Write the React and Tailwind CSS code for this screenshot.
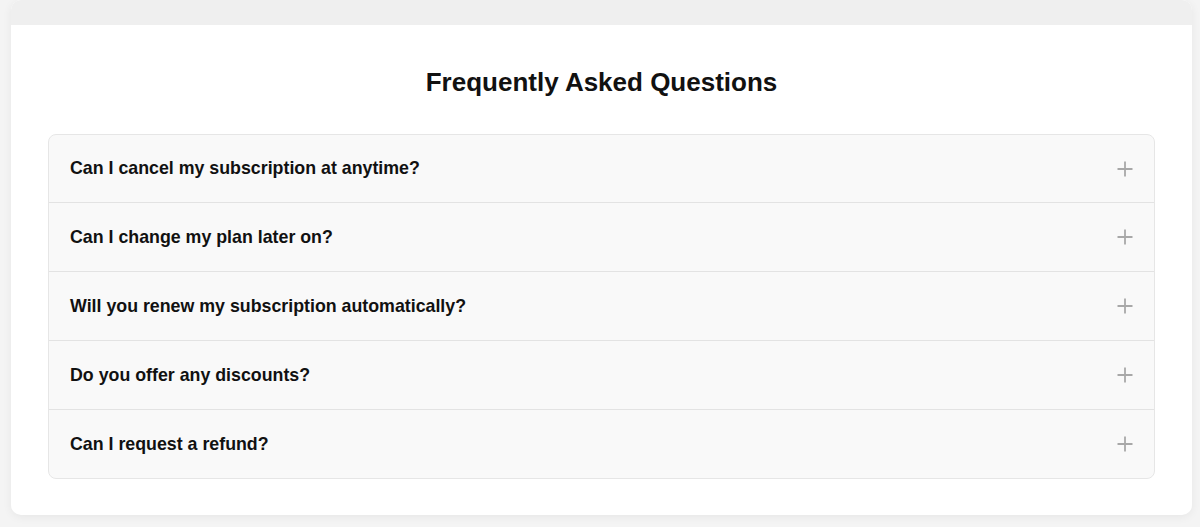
import React, { useState } from 'react';

const faqs = [
  { q: 'Can I cancel my subscription at anytime?', a: 'Yes, you can cancel your subscription at any time from your account settings.' },
  { q: 'Can I change my plan later on?', a: 'Absolutely. You can upgrade or downgrade your plan whenever you like.' },
  { q: 'Will you renew my subscription automatically?', a: 'Yes, subscriptions renew automatically at the end of each billing period.' },
  { q: 'Do you offer any discounts?', a: 'We offer discounts for annual plans and for non-profit organizations.' },
  { q: 'Can I request a refund?', a: 'Refunds are available within 14 days of purchase.' },
];

const PlusIcon = () => (
  <svg width="16" height="16" viewBox="0 0 16 16" className="text-[#a8a8a8]">
    <path d="M8 0.5V15.5M0.5 8H15.5" stroke="currentColor" strokeWidth="1.8" />
  </svg>
);

const App = () => {
  const [open, setOpen] = useState(null);

  return (
    <div className="min-h-[527px] bg-[#f4f4f4] pl-[11px] pr-[8px] pb-[12px] font-['Liberation_Sans',Arial,sans-serif]">
      <div className="bg-white rounded-[10px] overflow-hidden shadow-[0_2px_10px_rgba(0,0,0,0.06)]">
        <div className="h-[25px] bg-[#efefef]" />
        <div className="px-[37px] pt-[40px] pb-[36px]">
          <h2 className="text-center text-[26px] leading-[34px] font-bold text-[#111]">Frequently Asked Questions</h2>
          <div className="mt-[35px] border border-[#e6e6e6] rounded-[8px] bg-[#f9f9f9] overflow-hidden">
            {faqs.map((item, i) => (
              <div key={item.q} className={i > 0 ? 'border-t border-[#e3e3e3]' : ''}>
                <button
                  onClick={() => setOpen(open === i ? null : i)}
                  className={`w-full ${i === 0 ? 'h-[67px]' : 'h-[68px]'} flex items-center justify-between pl-[21px] pr-[21px] text-left`}
                >
                  <span className="text-[17.8px] font-bold text-[#111]">{item.q}</span>
                  <PlusIcon />
                </button>
                {open === i && (
                  <div className="px-[21px] pb-[20px] text-[15px] text-[#555]">{item.a}</div>
                )}
              </div>
            ))}
          </div>
        </div>
      </div>
    </div>
  );
};

export default App;
